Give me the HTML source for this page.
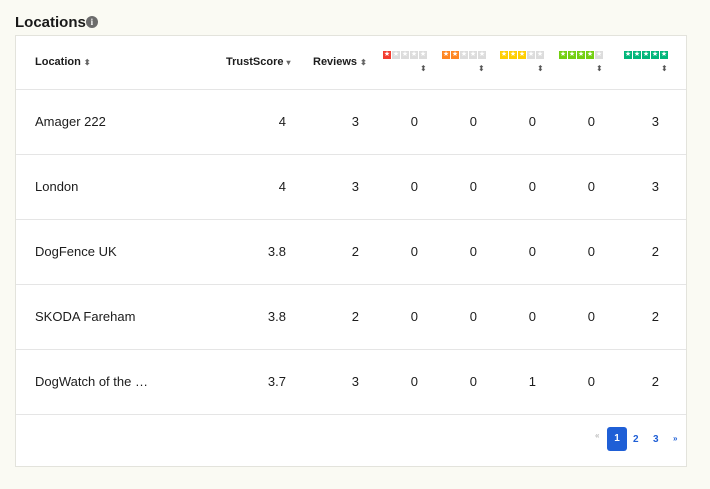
<!DOCTYPE html>
<html><head><style>
*{margin:0;padding:0;box-sizing:border-box}
body{width:710px;height:489px;background:#fafaf3;font-family:"Liberation Sans",Arial,sans-serif;color:#1c1c1c;position:relative;overflow:hidden}
.t{position:absolute;left:15px;top:14px;font-size:15px;font-weight:bold;color:#191919}
.i{display:inline-block;width:12px;height:12px;border-radius:50%;background:#6b6b6b;color:#fff;font-size:9px;text-align:center;line-height:12px;vertical-align:2px;font-family:"Liberation Serif",serif;font-weight:bold}
.card{position:absolute;left:15px;top:35px;width:672px;height:432px;background:#fff;border:1px solid #e3e3dc}
.h{position:absolute;font-size:11px;font-weight:bold;top:20px}
.s{font-size:8px;color:#666}
.line{position:absolute;left:0;right:0;height:1px;background:#e5e5e5}
.c{position:absolute;font-size:13px}
.r{text-align:right}
.st{position:absolute;top:15px;display:flex;gap:1px}
.st span{width:8px;height:8px;background:#dcdcdc;color:#fff;font-size:7px;line-height:8px;text-align:center}
.so{position:absolute;top:28px;font-size:8px;color:#555}
.pg{position:absolute;top:393px;font-size:10px;font-weight:bold;color:#1f5fd6}
</style></head><body>
<div class="t">Locations<span class="i">i</span></div>
<div class="card">
<div class="h" style="left:19px">Location <span class="s">⬍</span></div>
<div class="h" style="left:210px">TrustScore <span class="s">▾</span></div>
<div class="h" style="left:297px">Reviews <span class="s">⬍</span></div>

<div class="st" style="left:367px"><span style="background:#f23c2f">★</span><span>★</span><span>★</span><span>★</span><span>★</span></div>
<div class="st" style="left:426px"><span style="background:#ff8622">★</span><span style="background:#ff8622">★</span><span>★</span><span>★</span><span>★</span></div>
<div class="st" style="left:484px"><span style="background:#ffce00">★</span><span style="background:#ffce00">★</span><span style="background:#ffce00">★</span><span>★</span><span>★</span></div>
<div class="st" style="left:543px"><span style="background:#73cf11">★</span><span style="background:#73cf11">★</span><span style="background:#73cf11">★</span><span style="background:#73cf11">★</span><span>★</span></div>
<div class="st" style="left:608px"><span style="background:#00b67a">★</span><span style="background:#00b67a">★</span><span style="background:#00b67a">★</span><span style="background:#00b67a">★</span><span style="background:#00b67a">★</span></div>
<div class="so" style="left:404px">⬍</div><div class="so" style="left:462px">⬍</div><div class="so" style="left:521px">⬍</div><div class="so" style="left:580px">⬍</div><div class="so" style="left:645px">⬍</div>

<div class="line" style="top:53px"></div>
<div class="line" style="top:118px"></div>
<div class="line" style="top:183px"></div>
<div class="line" style="top:248px"></div>
<div class="line" style="top:313px"></div>
<div class="line" style="top:378px"></div>

<div id="rows"></div>
<div class="pg" style="left:579px;color:#bbb;font-size:8px;top:395px">«</div>
<div style="position:absolute;left:591px;top:391px;width:20px;height:24px;background:#1f5fd6;border-radius:3px;color:#fff;font-size:10px;font-weight:bold;text-align:center;line-height:24px">1</div>
<div class="pg" style="left:617px;top:398px">2</div>
<div class="pg" style="left:637px;top:398px">3</div>
<div class="pg" style="left:657px;top:398px;font-size:8px">»</div>
</div>
<script>
var d=[["Amager 222","4",3,0,0,0,0,3],["London","4",3,0,0,0,0,3],["DogFence UK","3.8",2,0,0,0,0,2],["SKODA Fareham","3.8",2,0,0,0,0,2],["DogWatch of the …","3.7",3,0,0,1,0,2]];
var R=[270,343,402,461,520,579,643],h="";
d.forEach(function(r,i){var y=78+65*i;h+='<div class="c" style="left:19px;top:'+y+'px">'+r[0]+'</div>';
for(var j=1;j<8;j++)h+='<div class="c r" style="left:'+(R[j-1]-40)+'px;width:40px;top:'+y+'px">'+r[j]+'</div>';});
document.getElementById("rows").innerHTML=h;
</script>
</body></html>
